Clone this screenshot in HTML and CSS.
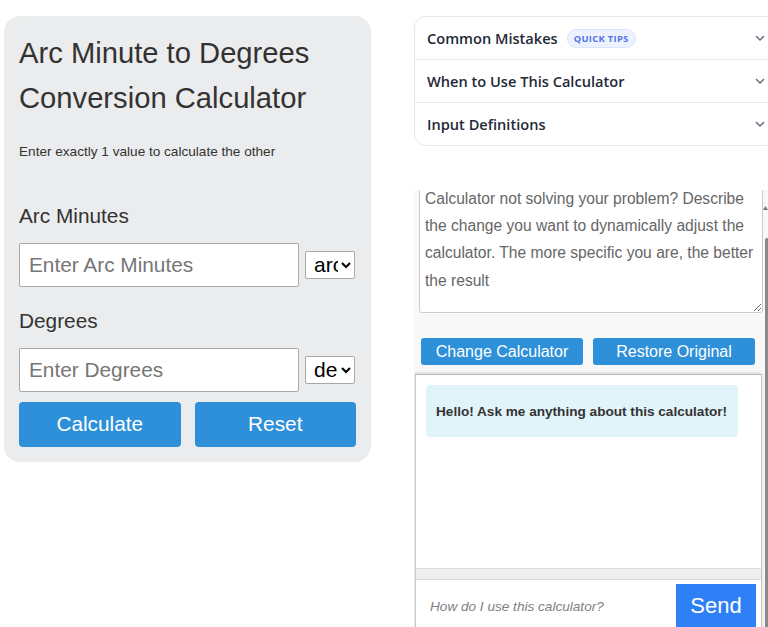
FILE: index.html
```html
<!DOCTYPE html>
<html>
  <head>
    <meta charset="UTF-8" />
    <title>Arc Minute to Degrees Conversion Calculator</title>
    <link rel="stylesheet" href="styles.css">
  </head>
  <body>
    <div class="page">
      <div class="calculator">
        <h1>Arc Minute to Degrees Conversion Calculator</h1>
        <p class="hint">Enter exactly 1 value to calculate the other</p>

        <div class="field">
          <label for="arcmin">Arc Minutes</label>
          <div class="input-row">
            <input id="arcmin" type="text" placeholder="Enter Arc Minutes" />
            <select>
              <option>arcmin</option>
            </select>
          </div>
        </div>

        <div class="field">
          <label for="deg">Degrees</label>
          <div class="input-row">
            <input id="deg" type="text" placeholder="Enter Degrees" />
            <select>
              <option>deg</option>
            </select>
          </div>
        </div>

        <div class="actions">
          <button class="btn">Calculate</button>
          <button class="btn">Reset</button>
        </div>
      </div>

      <div class="side">
        <div class="accordion">
          <div class="acc-row">
            <span class="acc-title">Common Mistakes <span class="badge">Quick Tips</span></span>
            <svg class="chev" width="16" height="16" viewBox="0 0 16 16"><path d="M4.5 6.5 8 10l3.5-3.5" fill="none" stroke="#6b7280" stroke-width="1.6" stroke-linecap="round" stroke-linejoin="round"/></svg>
          </div>
          <div class="acc-row">
            <span class="acc-title">When to Use This Calculator</span>
            <svg class="chev" width="16" height="16" viewBox="0 0 16 16"><path d="M4.5 6.5 8 10l3.5-3.5" fill="none" stroke="#6b7280" stroke-width="1.6" stroke-linecap="round" stroke-linejoin="round"/></svg>
          </div>
          <div class="acc-row">
            <span class="acc-title">Input Definitions</span>
            <svg class="chev" width="16" height="16" viewBox="0 0 16 16"><path d="M4.5 6.5 8 10l3.5-3.5" fill="none" stroke="#6b7280" stroke-width="1.6" stroke-linecap="round" stroke-linejoin="round"/></svg>
          </div>
        </div>

        <div class="ai-panel">
          <div class="ai-content">
            <textarea class="change-box">Calculator not solving your problem? Describe the change you want to dynamically adjust the calculator. The more specific you are, the better the result</textarea>

            <div class="ai-actions">
              <button class="btn-small">Change Calculator</button>
              <button class="btn-small">Restore Original</button>
            </div>

            <div class="chat">
              <div class="chat-messages">
                <div class="bubble">Hello! Ask me anything about this calculator!</div>
              </div>
              <div class="chat-divider"></div>
              <div class="chat-input">
                <input type="text" placeholder="How do I use this calculator?" />
                <button class="send">Send</button>
              </div>
            </div>
          </div>

          <!-- scrollbar of the panel -->
          <div class="scrollbar">
            <svg width="5" height="6" viewBox="0 0 5 6"><path d="M0 5 2.5 1 5 5z" fill="#777"/></svg>
            <div class="thumb"></div>
          </div>
        </div>
      </div>
    </div>
  </body>
</html>
```

FILE: styles.css
```css
body {
  margin: 0;
  overflow: hidden;
  background: #fff;
  font-family: "Liberation Sans", Arial, sans-serif;
  color: #333;
}

.page {
  display: flex;
  align-items: flex-start;
  padding: 16px 0 0 4px;
  gap: 43px;
  width: 820px;
}

/* left card */
.calculator {
  width: 367px;
  box-sizing: border-box;
  padding: 15px 15px 15px;
  background-color: #ebeced;
  border-radius: 16px;
}

.calculator h1 {
  margin: 0;
  font-size: 29.2px;
  font-weight: normal;
  line-height: 44.5px;
  color: #333;
}

.hint {
  margin: 24px 0 0;
  font-size: 13.6px;
  line-height: 15.6px;
}

.field {
  margin-top: 44px;
}

.field + .field {
  margin-top: 22px;
}

.field label {
  display: block;
  font-size: 20.8px;
  line-height: 24px;
  margin-bottom: 15px;
}

.input-row {
  display: flex;
  align-items: center;
  gap: 6px;
}

.input-row input {
  width: 280px;
  height: 44px;
  box-sizing: border-box;
  border: 1px solid #a9a9a9;
  border-radius: 2px;
  padding: 0 9px;
  font-family: inherit;
  font-size: 20.8px;
  color: #333;
  background: #fff;
}

.input-row input::placeholder {
  color: #767676;
}

.input-row select {
  width: 50px;
  height: 28px;
  box-sizing: border-box;
  border: 1px solid #a9a9a9;
  border-radius: 2px;
  background: #fff;
  font-family: inherit;
  font-size: 21px;
  color: #000;
  padding: 0 0 0 4px;
}

.actions {
  display: flex;
  gap: 14px;
  margin-top: 10px;
}

.btn {
  flex: 1;
  height: 45px;
  border: none;
  border-radius: 4px;
  background-color: #2e90d8;
  color: #fff;
  font-family: inherit;
  font-size: 20.8px;
}

/* right side */
.side {
  width: 365px;
  flex-shrink: 0;
}

.accordion {
  border: 1px solid #e5e7eb;
  border-radius: 12px;
  background: #fff;
}

.acc-row {
  display: flex;
  align-items: center;
  justify-content: space-between;
  height: 42px;
  padding: 0 10px 0 12px;
  font-family: "Open Sans", "Noto Sans", sans-serif;
}

.acc-row + .acc-row {
  border-top: 1px solid #e5e7eb;
}

.acc-title {
  display: flex;
  align-items: center;
  gap: 9px;
  font-size: 14.6px;
  font-weight: 600;
  color: #1f2937;
}

.badge {
  display: inline-block;
  padding: 3px 6px;
  border: 1px solid #dbe4fe;
  border-radius: 10px;
  background-color: #eef2ff;
  color: #5574e8;
  font-size: 9.4px;
  font-weight: 700;
  letter-spacing: 0.3px;
  text-transform: uppercase;
  line-height: 11px;
}

.ai-panel {
  display: flex;
  width: 354px;
  height: 437px;
  margin-top: 44px;
  overflow: hidden;
  background-color: #f8f8f8;
}

.ai-content {
  width: 349px;
}

.change-box {
  display: block;
  width: 344px;
  height: 134px;
  box-sizing: border-box;
  margin: -11px 0 0 5px;
  padding: 5px 2px 5px 5px;
  border: 1px solid #ccc;
  border-radius: 3px;
  background: #fff;
  font-family: "Liberation Sans", Arial, sans-serif;
  font-size: 15.6px;
  line-height: 27.2px;
  color: #666;
  resize: vertical;
}

.ai-actions {
  display: flex;
  gap: 10px;
  margin: 25px 0 0 7px;
}

.btn-small {
  width: 162px;
  height: 27px;
  border: none;
  border-radius: 3px;
  background-color: #2e90d8;
  color: #fff;
  font-family: inherit;
  font-size: 16px;
  padding: 0;
}

.chat {
  margin: 9px 0 0 1px;
  width: 347px;
  box-sizing: border-box;
  border: 1px solid #c8c8c8;
  border-top-color: #bbb;
  background: #fff;
  box-shadow: 0 -1px 3px rgba(0, 0, 0, 0.15);
}

.chat-messages {
  height: 193px;
  padding: 10px 10px 0;
  box-sizing: border-box;
}

.bubble {
  width: 312px;
  height: 52px;
  box-sizing: border-box;
  padding: 0 10px;
  display: flex;
  align-items: center;
  border-radius: 4px;
  background-color: #e1f4f9;
  font-size: 13.6px;
  font-weight: bold;
  color: #333;
}

.chat-divider {
  height: 10px;
  background-color: #eee;
  border-top: 1px solid #ddd;
  border-bottom: 1px solid #ddd;
}

.chat-input {
  display: flex;
  align-items: flex-start;
  padding: 4px 5px 5px 14px;
  gap: 8px;
}

.chat-input input {
  flex: 1;
  height: 44px;
  border: none;
  outline: none;
  padding: 0;
  font-family: inherit;
  font-size: 13.6px;
  font-style: italic;
}

.chat-input input::placeholder {
  color: #808080;
}

.send {
  width: 80px;
  height: 48px;
  border: none;
  background-color: #2f7ff6;
  color: #fff;
  font-family: inherit;
  font-size: 22px;
  padding: 0 0 4px;
}

.scrollbar {
  width: 5px;
  display: flex;
  flex-direction: column;
  align-items: flex-end;
  padding-top: 15px;
  gap: 27px;
}

.thumb {
  width: 3px;
  flex: 1;
  background-color: #8a8a8a;
  border-radius: 2px 0 0 0;
}
```
